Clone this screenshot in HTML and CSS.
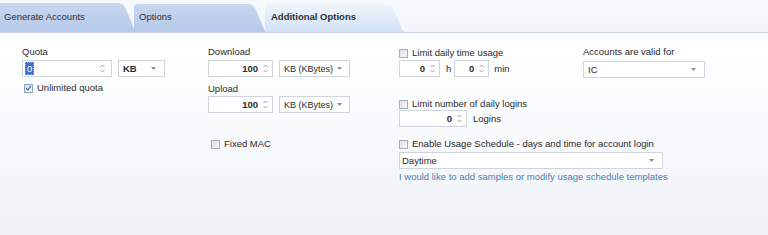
FILE: index.html
```html
<!DOCTYPE html>
<html>
<head>
<meta charset="utf-8">
<link rel="stylesheet" href="styles.css">
</head>
<body>
<div class="tabs">
  <div class="tab tab-gen">Generate Accounts</div>
  <div class="tab tab-opt">Options</div>
  <div class="tab tab-add">Additional Options</div>
</div>
<div class="panel">
  <div class="col col1">
    <div class="label">Quota</div>
    <div class="row">
      <div class="spin spin-quota"><span class="val sel">0</span><svg class="arrows" width="5" height="9" viewBox="0 0 5 9"><path d="M0.5 3 L2.5 1 L4.5 3 M0.5 6 L2.5 8 L4.5 6" fill="none" stroke="#8a8f96" stroke-width="0.9"/></svg></div>
      <div class="combo combo-kb"><span class="bold">KB</span><svg class="drop" width="5" height="3" viewBox="0 0 5 3"><path d="M0 0 H5 L2.5 3 Z" fill="#8a8f96"/></svg></div>
    </div>
    <div class="check checked"><span class="box"><svg width="8" height="8" viewBox="0 0 8 8"><path d="M1.2 4.2 L3.2 6.2 L6.8 1.6" fill="none" stroke="#3f62a3" stroke-width="1.4"/></svg></span>Unlimited quota</div>
  </div>
  <div class="col col2">
    <div class="label">Download</div>
    <div class="row">
      <div class="spin spin-num"><span class="val bold">100</span><svg class="arrows" width="5" height="9" viewBox="0 0 5 9"><path d="M0.5 3 L2.5 1 L4.5 3 M0.5 6 L2.5 8 L4.5 6" fill="none" stroke="#8a8f96" stroke-width="0.9"/></svg></div>
      <div class="combo combo-unit"><span>KB (KBytes)</span><svg class="drop" width="5" height="3" viewBox="0 0 5 3"><path d="M0 0 H5 L2.5 3 Z" fill="#8a8f96"/></svg></div>
    </div>
    <div class="label label-up">Upload</div>
    <div class="row">
      <div class="spin spin-num"><span class="val bold">100</span><svg class="arrows" width="5" height="9" viewBox="0 0 5 9"><path d="M0.5 3 L2.5 1 L4.5 3 M0.5 6 L2.5 8 L4.5 6" fill="none" stroke="#8a8f96" stroke-width="0.9"/></svg></div>
      <div class="combo combo-unit"><span>KB (KBytes)</span><svg class="drop" width="5" height="3" viewBox="0 0 5 3"><path d="M0 0 H5 L2.5 3 Z" fill="#8a8f96"/></svg></div>
    </div>
    <div class="check check-mac"><span class="box"></span>Fixed MAC</div>
  </div>
  <div class="col col3">
    <div class="check check-top"><span class="box"></span>Limit daily time usage</div>
    <div class="row row-time">
      <div class="spin spin-small"><span class="val bold">0</span><svg class="arrows" width="5" height="9" viewBox="0 0 5 9"><path d="M0.5 3 L2.5 1 L4.5 3 M0.5 6 L2.5 8 L4.5 6" fill="none" stroke="#8a8f96" stroke-width="0.9"/></svg></div>
      <span class="unit unit-h">h</span>
      <div class="spin spin-small2"><span class="val bold">0</span><svg class="arrows" width="5" height="9" viewBox="0 0 5 9"><path d="M0.5 3 L2.5 1 L4.5 3 M0.5 6 L2.5 8 L4.5 6" fill="none" stroke="#8a8f96" stroke-width="0.9"/></svg></div>
      <span class="unit unit-min">min</span>
    </div>
    <div class="check check-logins"><span class="box"></span>Limit number of daily logins</div>
    <div class="row row-logins">
      <div class="spin spin-logins"><span class="val bold">0</span><svg class="arrows" width="5" height="9" viewBox="0 0 5 9"><path d="M0.5 3 L2.5 1 L4.5 3 M0.5 6 L2.5 8 L4.5 6" fill="none" stroke="#8a8f96" stroke-width="0.9"/></svg></div>
      <span class="unit">Logins</span>
    </div>
    <div class="check check-sched"><span class="box"></span>Enable Usage Schedule - days and time for account login</div>
    <div class="combo combo-sched"><span>Daytime</span><svg class="drop" width="5" height="3" viewBox="0 0 5 3"><path d="M0 0 H5 L2.5 3 Z" fill="#8a8f96"/></svg></div>
    <a class="link" href="#">I would like to add samples or modify usage schedule templates</a>
  </div>
  <div class="col col4">
    <div class="label">Accounts are valid for</div>
    <div class="combo combo-valid"><span>IC</span><svg class="drop" width="5" height="3" viewBox="0 0 5 3"><path d="M0 0 H5 L2.5 3 Z" fill="#8a8f96"/></svg></div>
  </div>
</div>
</body>
</html>
```

FILE: styles.css
```css
html, body {
  margin: 0;
  padding: 0;
}
body {
  width: 768px;
  height: 235px;
  overflow: hidden;
  font-family: "Liberation Sans", Arial, sans-serif;
  font-size: 9px;
  color: #2b2b2b;
  background: #ffffff;
}
.tabs {
  display: flex;
  height: 32px;
  background: linear-gradient(#f7f9fc, #f2f5f9);
  border-bottom: 1px solid #c9d3e0;
  box-sizing: content-box;
}
.tab {
  position: relative;
  margin-top: 4px;
  height: 28px;
  line-height: 26px;
  box-sizing: border-box;
  white-space: nowrap;
  font-size: 9.5px;
  color: #2a2f38;
}
.tab-gen {
  width: 138px;
  padding-left: 4px;
  margin-top: 3px;
  height: 29px;
  line-height: 28px;
  z-index: 2;
  background: linear-gradient(#c9d7ef, #b6c9ea);
  clip-path: path("M0 0 H117 C122 0 124 2 126 6 L134 26 C135 28 136 29 138 29 H0 Z");
}
.tab-opt {
  width: 134px;
  margin-left: -4px;
  padding-left: 5px;
  z-index: 1;
  background: linear-gradient(#c9d7ef, #b6c9ea);
  clip-path: path("M0 3 Q0 0 3 0 H113 C118 0 120 2 122 6 L130 25 C131 27 132 28 134 28 H0 Z");
}
.tab-add {
  width: 141px;
  margin-left: -3px;
  padding-left: 6px;
  z-index: 3;
  font-weight: bold;
  background: linear-gradient(#f0f5fc, #d3e1f5);
  clip-path: path("M0 3 Q0 0 3 0 H120 C125 0 127 2 129 6 L137 25 C138 27 139 28 141 28 H0 Z");
}
.panel {
  display: grid;
  grid-template-columns: 186px 191px 184px 1fr;
  padding: 13px 0 0 22px;
  height: 202px;
  box-sizing: border-box;
  background: linear-gradient(#ffffff 0%, #fbfcfd 35%, #eef2f7 100%);
}
.col {
  display: flex;
  flex-direction: column;
  align-items: flex-start;
  min-width: 0;
}
.label {
  height: 12px;
  line-height: 12px;
  margin-bottom: 2px;
  font-size: 9.5px;
  white-space: nowrap;
}
.label-up {
  margin-top: 6px;
  margin-bottom: 1px;
}
.row {
  display: flex;
  align-items: center;
  gap: 6px;
}
.spin, .combo {
  height: 17px;
  box-sizing: border-box;
  border: 1px solid #cfd5de;
  background: #ffffff;
  display: flex;
  align-items: center;
  font-size: 9.5px;
  flex-shrink: 0;
  white-space: nowrap;
}
.spin {
  justify-content: flex-end;
  padding-right: 4px;
}
.spin .val {
  margin-right: 5px;
  line-height: 11px;
}
.spin .arrows {
  display: block;
}
.spin-quota {
  width: 90px;
  justify-content: space-between;
  padding-left: 2px;
  padding-right: 6px;
}
.val.sel {
  background: #3d6fc2;
  color: #ffffff;
  padding: 0 1px;
  height: 11px;
  width: 5px;
  border: 1px dotted #9ab;
}
.spin-num {
  width: 65px;
}
.spin-small {
  width: 41px;
}
.spin-small2 {
  width: 35px;
}
.spin-logins {
  width: 68px;
}
.combo {
  justify-content: space-between;
  padding: 0 8px 0 4px;
}
.combo-kb {
  width: 47px;
}
.combo-unit {
  width: 71px;
  padding-right: 7px;
  font-size: 9px;
}
.combo-valid {
  width: 122px;
  margin-top: 1px;
}
.combo-sched {
  width: 264px;
  margin-top: 2px;
  padding-left: 2px;
}
.bold {
  font-weight: bold;
}
.drop {
  display: block;
}
.check {
  display: flex;
  align-items: center;
  height: 12px;
  line-height: 12px;
  font-size: 9.5px;
  white-space: nowrap;
}
.check .box {
  width: 9px;
  height: 9px;
  box-sizing: border-box;
  border: 1px solid #a9adb3;
  background: linear-gradient(135deg, #dfe1e4, #f6f7f8);
  margin-right: 4px;
  display: flex;
  align-items: center;
  justify-content: center;
  flex-shrink: 0;
}
.check.checked .box {
  border-color: #8ea2c2;
  background: linear-gradient(135deg, #dbe3ef, #f5f7fb);
}
.col1 .check {
  margin-top: 5px;
  margin-left: 2px;
}
.check-mac {
  margin-top: 25px;
  margin-left: 3px;
}
.check-top {
  margin-top: 1px;
}
.row-time {
  gap: 0;
  margin-top: 1px;
}
.unit-h {
  margin: 0 3px 0 6px;
}
.unit-min {
  margin-left: 5px;
}
.unit {
  font-size: 9.5px;
  white-space: nowrap;
}
.check-logins {
  margin-top: 21px;
}
.row-logins {
  margin-top: 0;
}
.check-sched {
  margin-top: 11px;
}
.link {
  margin-top: 2px;
  color: #4f7cb6;
  text-decoration: none;
  font-size: 9.5px;
  line-height: 12px;
  white-space: nowrap;
}
```
